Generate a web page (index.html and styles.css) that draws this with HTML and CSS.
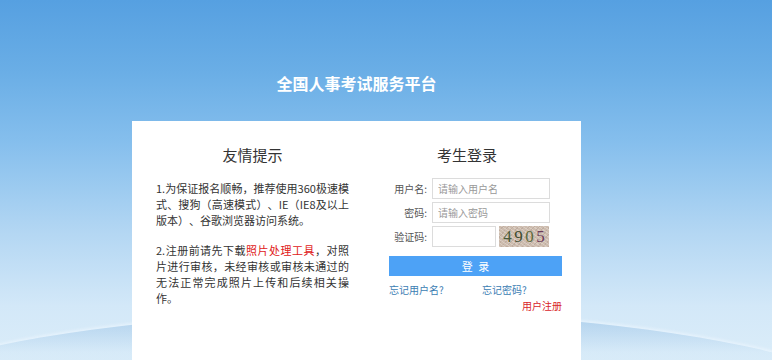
FILE: index.html
```html
<!DOCTYPE html>
<html lang="zh-CN">
<head>
    <meta charset="UTF-8">
    <meta name="viewport" content="width=device-width, initial-scale=1.0">
    <title>全国人事考试服务平台</title>
    <link rel="stylesheet" href="styles.css">
</head>
<body>
    <div class="page">
        <h1 class="site-title">全国人事考试服务平台</h1>
        <div class="card">
            <div class="tips">
                <h3>友情提示</h3>
                <p>1.为保证报名顺畅，推荐使用360极速模式、搜狗（高速模式）、IE（IE8及以上版本）、谷歌浏览器访问系统。</p>
                <p>2.注册前请先下载<a href="#" class="tool-link">照片处理工具</a>，对照片进行审核，未经审核或审核未通过的无法正常完成照片上传和后续相关操作。</p>
            </div>
            <div class="login">
                <h3>考生登录</h3>
                <div class="form-row">
                    <label>用户名:</label>
                    <input type="text" class="field" placeholder="请输入用户名">
                </div>
                <div class="form-row">
                    <label>密码:</label>
                    <input type="password" class="field" placeholder="请输入密码">
                </div>
                <div class="form-row">
                    <label>验证码:</label>
                    <input type="text" class="field code">
                    <div class="captcha"><span class="d1">4</span><span class="d2">9</span><span class="d3">0</span><span class="d4">5</span></div>
                </div>
                <button class="btn-login">登 录</button>
                <div class="links">
                    <a href="#" class="forgot-user">忘记用户名?</a>
                    <a href="#">忘记密码?</a>
                </div>
                <div class="register"><a href="#">用户注册</a></div>
            </div>
        </div>
    </div>
</body>
</html>
```

FILE: styles.css
```css
html, body { margin: 0; height: 360px; overflow: hidden; }
body {
    font-family: "Noto Sans CJK SC", "Microsoft YaHei", sans-serif;
    background: linear-gradient(to bottom, #56a0e1 0%, #6aaee6 20%, #86bfed 40%, #b4d7f3 65%, #d3e8f8 85%, #dbedf9 100%);
    position: relative;
}
body::before {
    content: "";
    position: absolute;
    left: -220px;
    top: 312px;
    width: 1180px;
    height: 300px;
    border-radius: 50%;
    background: linear-gradient(to bottom, rgba(140, 185, 225, 0.55), rgba(200, 225, 245, 0.2) 40px, rgba(220, 237, 250, 0) 70px);
    box-shadow: 0 -2px 3px rgba(235, 245, 253, 0.7);
}
.page { position: relative; width: 449px; margin-left: 132px; }
.site-title {
    margin: 0;
    padding-top: 72px;
    font-size: 16px;
    line-height: 22px;
    font-weight: bold;
    color: #fff;
    text-align: center;
}
.card {
    margin-top: 27px;
    background: #fff;
    min-height: 260px;
    display: flex;
    padding: 24px 19px 0 24px;
}
.card h3 { margin: 0; font-size: 15px; line-height: 20px; font-weight: normal; color: #333; text-align: center; }
.tips { width: 193px; }
.tips p {
    margin: 15px 0 0;
    font-size: 11px;
    line-height: 16px;
    color: #333;
    text-align: justify;
    text-spacing-trim: space-all;
}
.tips p + p { margin-top: 14px; }
.tool-link { color: #e02020; text-decoration: none; }
.login { width: 173px; margin-left: 40px; }
.login h3 { padding-right: 17px; }
.form-row { display: flex; align-items: center; margin-top: 3px; }
.login h3 + .form-row { margin-top: 13px; }
.form-row label { width: 38px; margin-right: 5px; text-align: right; font-size: 10px; color: #555; }
.field {
    box-sizing: border-box;
    width: 118px;
    height: 21px;
    border: 1px solid #dcdcdc;
    padding: 0 5px;
    font-family: inherit;
    font-size: 10px;
    outline: none;
}
.field::placeholder { color: #999; }
.field.code { width: 64px; }
.captcha {
    width: 50px;
    height: 21px;
    margin-left: 3px;
    background: #cdbcae;
    background-image: repeating-linear-gradient(35deg, rgba(255,255,255,0.25) 0 1px, transparent 1px 3px),
                      repeating-linear-gradient(-50deg, rgba(120,90,80,0.15) 0 1px, transparent 1px 4px);
    display: flex;
    justify-content: space-around;
    align-items: center;
    padding: 0 3px;
    box-sizing: border-box;
    font-family: "Liberation Serif", serif;
    font-size: 17px;
}
.d1 { color: #4a5a3a; }
.d2 { color: #3f4c30; }
.d3 { color: #5c6a3c; }
.d4 { color: #6a3a5a; }
.btn-login {
    display: block;
    width: 173px;
    height: 20px;
    margin-top: 9px;
    border: none;
    padding: 0;
    background: #4da2f6;
    color: #fff;
    font-family: inherit;
    font-size: 11px;
    word-spacing: 3px;
    cursor: pointer;
}
.links { display: flex; margin-top: 7px; font-size: 10px; line-height: 14px; }
.links a { color: #3b7db3; text-decoration: none; }
.links .forgot-user { width: 93px; flex-shrink: 0; }
.register { text-align: right; margin-top: 2px; font-size: 10px; line-height: 14px; }
.register a { color: #d9252b; text-decoration: none; }
```
